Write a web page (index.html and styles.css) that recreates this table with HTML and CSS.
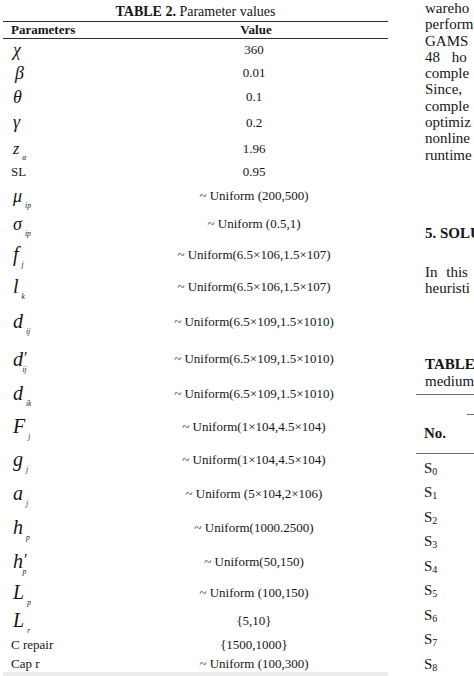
FILE: index.html
```html
<!DOCTYPE html>
<html>
<head>
<meta charset="utf-8">
<link rel="stylesheet" href="styles.css">
</head>
<body>
<div class="page">
  <section class="left">
    <div class="caption"><b>TABLE 2.</b> Parameter values</div>
    <table class="params">
      <colgroup><col class="c1"><col class="c2"></colgroup>
      <thead>
        <tr><th class="hp">Parameters</th><th class="hv">Value</th></tr>
      </thead>
      <tbody>
        <tr class="h22"><td class="p"><span class="g">χ</span></td><td class="v">360</td></tr>
        <tr class="h24"><td class="p"><span class="g gb">β</span></td><td class="v">0.01</td></tr>
        <tr class="h24"><td class="p"><span class="g">θ</span></td><td class="v">0.1</td></tr>
        <tr class="h27"><td class="p"><span class="g">γ</span></td><td class="v">0.2</td></tr>
        <tr class="h25"><td class="p"><span class="m mz">z<sub>α</sub></span></td><td class="v">1.96</td></tr>
        <tr class="h22"><td class="t">SL</td><td class="v">0.95</td></tr>
        <tr class="h26"><td class="p"><span class="g">μ<sub>ip</sub></span></td><td class="v">~ Uniform (200,500)</td></tr>
        <tr class="h30"><td class="p"><span class="g">σ<sub>ip</sub></span></td><td class="v">~ Uniform (0.5,1)</td></tr>
        <tr class="h31"><td class="p"><span class="m">f<sub>j</sub></span></td><td class="v">~ Uniform(6.5×106,1.5×107)</td></tr>
        <tr class="h33"><td class="p"><span class="m">l<sub>k</sub></span></td><td class="v">~ Uniform(6.5×106,1.5×107)</td></tr>
        <tr class="h38"><td class="p"><span class="m">d<sub>ij</sub></span></td><td class="v">~ Uniform(6.5×109,1.5×1010)</td></tr>
        <tr class="h36"><td class="p"><span class="m">d<span class="pr">′</span><sub class="bk">ij</sub></span></td><td class="v">~ Uniform(6.5×109,1.5×1010)</td></tr>
        <tr class="h33"><td class="p"><span class="m">d<sub>ik</sub></span></td><td class="v">~ Uniform(6.5×109,1.5×1010)</td></tr>
        <tr class="h33"><td class="p"><span class="m">F<sub>j</sub></span></td><td class="v">~ Uniform(1×104,4.5×104)</td></tr>
        <tr class="h34"><td class="p"><span class="m">g<sub>j</sub></span></td><td class="v">~ Uniform(1×104,4.5×104)</td></tr>
        <tr class="h34"><td class="p"><span class="m">a<sub>j</sub></span></td><td class="v">~ Uniform (5×104,2×106)</td></tr>
        <tr class="h34"><td class="p"><span class="m">h<sub>p</sub></span></td><td class="v">~ Uniform(1000.2500)</td></tr>
        <tr class="h33"><td class="p"><span class="m">h<span class="pr">′</span><sub class="bk">p</sub></span></td><td class="v">~ Uniform(50,150)</td></tr>
        <tr class="h30"><td class="p"><span class="m">L<sub>p</sub></span></td><td class="v">~ Uniform (100,150)</td></tr>
        <tr class="h26"><td class="p"><span class="m">L<sub>r</sub></span></td><td class="v">{5,10}</td></tr>
        <tr class="h22"><td class="t">C repair</td><td class="v">{1500,1000}</td></tr>
        <tr class="h16"><td class="t">Cap r</td><td class="v">~ Uniform (100,300)</td></tr>
      </tbody>
    </table>
    <div class="strip"></div>
  </section>

  <section class="right">
    <div class="para">
      <div class="ln">wareho</div>
      <div class="ln">perform</div>
      <div class="ln">GAMS</div>
      <div class="ln ws8">48 ho</div>
      <div class="ln">comple</div>
      <div class="ln">Since,</div>
      <div class="ln">comple</div>
      <div class="ln">optimiz</div>
      <div class="ln">nonline</div>
      <div class="ln">runtime</div>
    </div>
    <h2 class="sec">5. SOLU</h2>
    <div class="para p2">
      <div class="ln ws5">In this</div>
      <div class="ln">heuristi</div>
    </div>
    <div class="t3cap">
      <div class="ln"><b>TABLE</b></div>
      <div class="ln">medium</div>
    </div>
    <div class="t3">
      <div class="t3head">
        <div class="spanline"></div>
        <div class="no">No.</div>
      </div>
      <div class="srow">S<sub>0</sub></div>
      <div class="srow">S<sub>1</sub></div>
      <div class="srow">S<sub>2</sub></div>
      <div class="srow">S<sub>3</sub></div>
      <div class="srow">S<sub>4</sub></div>
      <div class="srow">S<sub>5</sub></div>
      <div class="srow">S<sub>6</sub></div>
      <div class="srow">S<sub>7</sub></div>
      <div class="srow">S<sub>8</sub></div>
    </div>
  </section>
</div>
</body>
</html>
```
FILE: styles.css
```css
html, body {
  margin: 0;
  padding: 0;
  overflow: hidden;
  background: #ffffff;
}
body {
  width: 474px;
  height: 676px;
  font-family: "Liberation Serif", "Times New Roman", serif;
  color: #151515;
}
.page {
  display: flex;
  align-items: flex-start;
  width: 474px;
  height: 676px;
  overflow: hidden;
}
.left {
  flex: none;
  width: 385px;
  margin-left: 3px;
}
.caption {
  height: 19px;
  padding-top: 2px;
  font-size: 14px;
  line-height: 19px;
  text-align: center;
}
.params {
  width: 385px;
  table-layout: fixed;
  border-collapse: collapse;
  font-size: 13px;
}
.c1 { width: 117px; }
.params thead tr {
  border-top: 1.5px solid #2e2e2e;
  border-bottom: 1.5px solid #2e2e2e;
}
.params th {
  height: 16px;
  padding: 0;
  line-height: 16px;
  font-weight: bold;
}
.hp {
  text-align: left;
  padding-left: 8px !important;
}
.hv {
  text-align: center;
  padding-left: 4px !important;
}
.params td {
  padding: 0;
  vertical-align: middle;
  line-height: 16px;
}
.h16 td { height: 16px; }
.h22 td { height: 22px; }
.h24 td { height: 24px; }
.h25 td { height: 25px; }
.h26 td { height: 26px; }
.h27 td { height: 27px; }
.h30 td { height: 30px; }
.h31 td { height: 31px; }
.h33 td { height: 33px; }
.h34 td { height: 34px; }
.h36 td { height: 36px; }
.h38 td { height: 38px; }
.params td.p { padding-left: 10px; }
.params td.t { padding-left: 8px; }
.params td.v { text-align: center; }

.g, .m {
  font-style: italic;
  line-height: 18px;
  white-space: nowrap;
}
.g { font-size: 18px; }
.gb { margin-left: 2px; }
.m { font-size: 20px; }
.g sub, .m sub {
  font-size: 7.5px;
  line-height: 0;
  vertical-align: -6px;
  margin-left: 3px;
}
.mz { font-size: 16px; }
.pr {
  font-style: normal;
  font-size: 16px;
  vertical-align: 3px;
  margin-left: 1px;
}
.m sub.bk { margin-left: -5px; }

.strip {
  height: 6px;
  background: #ececec;
}

.right {
  flex: none;
  width: 320px;
  margin-left: 28px;
}
.para {
  padding-left: 9px;
  font-size: 15px;
  line-height: 16.3px;
}
.ln { white-space: nowrap; }
.ws8 { word-spacing: 8px; }
.ws5 { word-spacing: 5px; }
.sec {
  margin: 60px 0 0 0;
  padding-left: 9px;
  font-size: 15px;
  line-height: 20px;
  font-weight: bold;
  white-space: nowrap;
}
.p2 { margin-top: 21px; }
.t3cap {
  margin-top: 59px;
  padding-left: 9px;
  font-size: 15px;
  line-height: 17px;
}
.t3 {
  margin-top: 4px;
  border-top: 1.5px solid #6a6a6a;
}
.t3head {
  padding-top: 19px;
  padding-bottom: 12px;
  border-bottom: 1.5px solid #6a6a6a;
}
.spanline {
  margin-left: 51px;
  border-top: 1.5px solid #6a6a6a;
}
.no {
  margin-top: 10px;
  padding-left: 8px;
  font-size: 15px;
  line-height: 16px;
  font-weight: bold;
}
.t3head + .srow { margin-top: 2px; }
.srow {
  height: 24.5px;
  padding-left: 8px;
  font-size: 15px;
  line-height: 24.5px;
}
.srow sub {
  font-size: 10px;
  line-height: 0;
  vertical-align: -2px;
}
```
